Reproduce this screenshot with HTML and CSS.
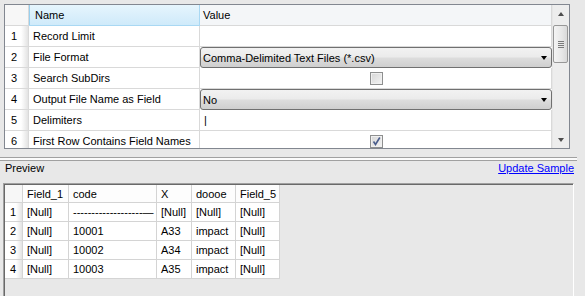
FILE: index.html
```html
<!DOCTYPE html>
<html>
<head>
<meta charset="utf-8">
<title>Properties</title>
<link rel="stylesheet" href="styles.css">
</head>
<body>
<div class="props">
  <div class="pgrid">
    <div class="hc corner"></div>
    <div class="hc name-h">Name</div>
    <div class="hc value-h">Value</div>

    <div class="rh">1</div><div class="nc">Record Limit</div><div class="vc"></div>
    <div class="rh">2</div><div class="nc">File Format</div>
    <div class="vc combo-cell"><div class="combo"><span>Comma-Delimited Text Files (*.csv)</span><i class="carrow"></i></div></div>
    <div class="rh">3</div><div class="nc">Search SubDirs</div>
    <div class="vc check-cell"><span class="chk"></span></div>
    <div class="rh">4</div><div class="nc">Output File Name as Field</div>
    <div class="vc combo-cell"><div class="combo"><span>No</span><i class="carrow"></i></div></div>
    <div class="rh">5</div><div class="nc">Delimiters</div><div class="vc caret-cell">|</div>
    <div class="rh">6</div><div class="nc">First Row Contains Field Names</div>
    <div class="vc check-cell"><span class="chk checked"><svg viewBox="0 0 11 11" width="11" height="11"><path d="M2.5 5.5 L4.5 8.5 L8.8 1.5" fill="none" stroke="#4a5d8c" stroke-width="1.6"/></svg></span></div>
  </div>
  <div class="vscroll">
    <div class="sbtn"><i class="up"></i></div>
    <div class="track">
      <div class="thumb"><span class="grip"></span></div>
    </div>
    <div class="sbtn"><i class="down"></i></div>
  </div>
</div>

<div class="splitter"></div>

<div class="pbar">
  <span class="plabel">Preview</span>
  <a class="plink" href="#">Update Sample</a>
</div>

<div class="preview">
  <div class="tgrid">
    <div class="th rn"></div><div class="th">Field_1</div><div class="th">code</div><div class="th">X</div><div class="th">doooe</div><div class="th">Field_5</div>

    <div class="td rn">1</div><div class="td">[Null]</div><div class="td">-------------------—</div><div class="td">[Null]</div><div class="td">[Null]</div><div class="td">[Null]</div>
    <div class="td rn">2</div><div class="td">[Null]</div><div class="td">10001</div><div class="td">A33</div><div class="td">impact</div><div class="td">[Null]</div>
    <div class="td rn">3</div><div class="td">[Null]</div><div class="td">10002</div><div class="td">A34</div><div class="td">impact</div><div class="td">[Null]</div>
    <div class="td rn">4</div><div class="td">[Null]</div><div class="td">10003</div><div class="td">A35</div><div class="td">impact</div><div class="td">[Null]</div>
  </div>
</div>
</body>
</html>
```

FILE: styles.css
```css
html, body {
  margin: 0;
  padding: 0;
}
body {
  width: 585px;
  height: 296px;
  overflow: hidden;
  background: #e8e8e8;
  font-family: "Liberation Sans", Arial, sans-serif;
  font-size: 11px;
  color: #000;
  padding-top: 4px;
  box-sizing: border-box;
}

/* ---------- property grid ---------- */
.props {
  margin-left: 4px;
  width: 566px;
  height: 145px;
  box-sizing: border-box;
  border: 1px solid #828790;
  background: #fff;
  display: flex;
  overflow: hidden;
}
.pgrid {
  display: grid;
  grid-template-columns: 24px 171px 352px;
  grid-auto-rows: 21px;
  align-content: start;
}
.pgrid > div {
  box-sizing: border-box;
  border-right: 1px solid #d9d9d9;
  border-bottom: 1px solid #d9d9d9;
  display: flex;
  align-items: center;
  white-space: nowrap;
  overflow: hidden;
}
.hc {
  background: linear-gradient(#ffffff, #f3f4f6);
}
.pgrid > .corner {
  background: #f7f7f7;
}
.pgrid > .name-h {
  background: linear-gradient(#e6f5fd, #cfeafa);
  border-right-color: #a9d8f3;
  border-bottom-color: #a9d8f3;
  box-shadow: inset 1px 0 0 #98cfee;
  padding-left: 6px;
}
.pgrid > .value-h {
  background: #f4f6f8;
  padding-left: 3px;
}
.pgrid > .rh {
  background: linear-gradient(to right, #ffffff 70%, #e3e3e3);
  padding-left: 6px;
}
.nc {
  padding-left: 4px;
}
.vc {
  padding-left: 3px;
}
.caret-cell {
  padding-left: 4px;
}
.pgrid > .combo-cell {
  padding: 0;
  border: none;
}
.combo {
  width: 100%;
  height: 21px;
  box-sizing: border-box;
  border: 1px solid #707070;
  border-radius: 3px;
  background: linear-gradient(#f2f2f2 0%, #ebebeb 48%, #dddddd 52%, #cfcfcf 100%);
  display: flex;
  align-items: center;
  justify-content: space-between;
  padding: 0 4px 0 2px;
}
.carrow {
  width: 0;
  height: 0;
  border-left: 3.5px solid transparent;
  border-right: 3.5px solid transparent;
  border-top: 4px solid #000;
}
.pgrid > .check-cell {
  justify-content: center;
  padding: 0;
}
.chk {
  width: 13px;
  height: 13px;
  box-sizing: border-box;
  border: 1px solid #8e8f8f;
  background: linear-gradient(135deg, #d6d6d6, #f4f4f4);
  box-shadow: inset 0 0 0 1px #f0f0f0;
  display: flex;
  align-items: center;
  justify-content: center;
  margin-left: 1px;
}
.chk svg {
  display: block;
}

/* scrollbar */
.vscroll {
  width: 17px;
  background: #ededed;
  display: flex;
  flex-direction: column;
  border-left: 1px solid #e6e6e6;
  box-sizing: border-box;
}
.sbtn {
  height: 17px;
  display: flex;
  align-items: center;
  justify-content: center;
}
.up, .down {
  width: 0;
  height: 0;
  border-left: 3.5px solid transparent;
  border-right: 3.5px solid transparent;
}
.up {
  border-bottom: 4px solid #4d4d4d;
}
.down {
  border-top: 4px solid #4d4d4d;
}
.track {
  flex: 1;
  padding-top: 3px;
}
.thumb {
  margin-left: 0;
  width: 15px;
  height: 38px;
  box-sizing: border-box;
  border: 1px solid #979797;
  border-radius: 2px;
  background: linear-gradient(to right, #f4f4f4, #e7e7e7 60%, #d9d9d9);
  display: flex;
  align-items: center;
  justify-content: center;
}
.grip {
  width: 6px;
  height: 7px;
  background: repeating-linear-gradient(#7a7a7a 0 1px, transparent 1px 2px);
}

/* ---------- splitter & preview bar ---------- */
.splitter {
  margin-top: 8px;
  width: 577px;
  height: 4px;
  box-sizing: border-box;
  border-top: 1px solid #a0a0a0;
  border-bottom: 1px solid #a0a0a0;
  background: #fbfbfb;
}
.pbar {
  width: 574px;
  height: 22px;
  box-sizing: border-box;
  padding: 1px 0 0 5px;
  line-height: 13px;
  display: flex;
  justify-content: space-between;
  align-items: flex-start;
}
.plink {
  color: #0000ff;
  text-decoration: underline;
}

/* ---------- preview grid ---------- */
.preview {
  margin-left: 3px;
  width: 571px;
  height: 120px;
  box-sizing: border-box;
  border: 1px solid;
  border-color: #a0a0a0 #ffffff #ffffff #a0a0a0;
  box-shadow: inset 1px 1px 0 #696969;
  padding: 1px 0 0 1px;
  background: #e8e8e8;
}
.tgrid {
  display: grid;
  grid-template-columns: 18px 46px 88px 35px 44px 44px;
  grid-template-rows: 18px;
  grid-auto-rows: 19px;
  justify-content: start;
}
.tgrid > div {
  box-sizing: border-box;
  background: #fff;
  border-right: 1px solid #d4d4d4;
  border-bottom: 1px solid #d4d4d4;
  padding-left: 4px;
  display: flex;
  align-items: center;
  white-space: nowrap;
  overflow: hidden;
}
.tgrid > .rn {
  background: linear-gradient(to right, #ffffff 65%, #e3e3e3);
  padding-left: 5px;
}
.tgrid > .th {
  background: #fdfdfd;
}
.tgrid > .th.rn {
  background: #f7f7f7;
}
```
